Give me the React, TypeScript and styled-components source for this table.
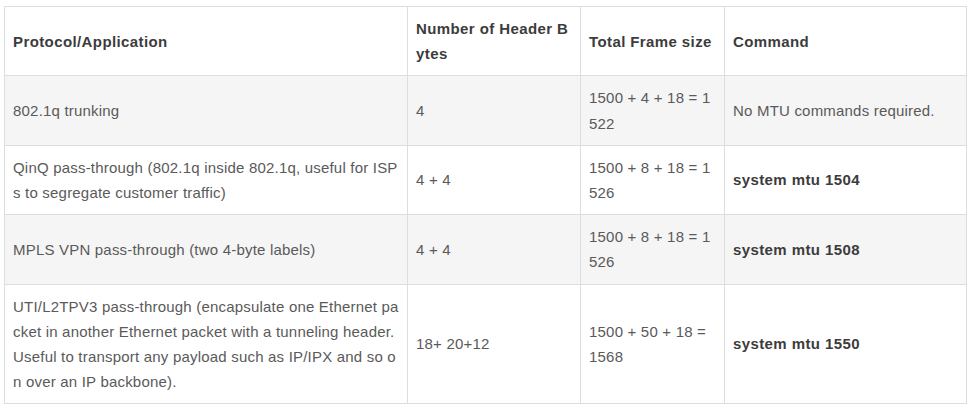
import React from "react";
import styled, { createGlobalStyle } from "styled-components";

const Global = createGlobalStyle`
  html, body { margin: 0; padding: 0; background: #fff; }
  body { font-family: "Liberation Sans", Arial, sans-serif; }
`;

const Wrap = styled.div`
  padding: 6px 4px;
`;

const Table = styled.table`
  border-collapse: collapse;
  table-layout: fixed;
  width: 962px;
  font-size: 15px;
  line-height: 25.2px;
`;

const Row = styled.tr<{ $striped?: boolean }>`
  background: ${(p) => (p.$striped ? "#f5f5f5" : "#fff")};
`;

const Th = styled.th`
  border: 1px solid #ddd;
  padding: 9px 8px;
  text-align: left;
  vertical-align: middle;
  font-weight: bold;
  color: #3c3c3c;
  letter-spacing: 0.4px;
  word-break: break-all;
`;

const Td = styled.td<{ $cmd?: boolean }>`
  border: 1px solid #ddd;
  padding: 9px 8px;
  vertical-align: middle;
  color: ${(p) => (p.$cmd ? "#3c3c3c" : "#5a5a5a")};
  font-weight: ${(p) => (p.$cmd ? "bold" : "normal")};
  letter-spacing: ${(p) => (p.$cmd ? "0.4px" : "0.2px")};
  word-break: break-all;
`;

const rows = [
  {
    proto: "802.1q trunking",
    bytes: "4",
    total: "1500 + 4 + 18 = 1522",
    cmd: "No MTU commands required.",
    bold: false,
  },
  {
    proto:
      "QinQ pass-through (802.1q inside 802.1q, useful for ISPs to segregate customer traffic)",
    bytes: "4 + 4",
    total: "1500 + 8 + 18 = 1526",
    cmd: "system mtu 1504",
    bold: true,
  },
  {
    proto: "MPLS VPN pass-through (two 4-byte labels)",
    bytes: "4 + 4",
    total: "1500 + 8 + 18 = 1526",
    cmd: "system mtu 1508",
    bold: true,
  },
  {
    proto:
      "UTI/L2TPV3 pass-through (encapsulate one Ethernet packet in another Ethernet packet with a tunneling header. Useful to transport any payload such as IP/IPX and so on over an IP backbone).",
    bytes: "18+ 20+12",
    total: "1500 + 50 + 18 = 1568",
    cmd: "system mtu 1550",
    bold: true,
  },
];

export default function App() {
  return (
    <Wrap>
      <Global />
      <Table>
        <colgroup>
          <col style={{ width: 403 }} />
          <col style={{ width: 173 }} />
          <col style={{ width: 144 }} />
          <col style={{ width: 242 }} />
        </colgroup>
        <thead>
          <Row>
            <Th>Protocol/Application</Th>
            <Th>Number of Header Bytes</Th>
            <Th>Total Frame size</Th>
            <Th>Command</Th>
          </Row>
        </thead>
        <tbody>
          {rows.map((r, i) => (
            <Row key={i} $striped={i % 2 === 0}>
              <Td>{r.proto}</Td>
              <Td>{r.bytes}</Td>
              <Td>{r.total}</Td>
              <Td $cmd={r.bold}>{r.cmd}</Td>
            </Row>
          ))}
        </tbody>
      </Table>
    </Wrap>
  );
}
